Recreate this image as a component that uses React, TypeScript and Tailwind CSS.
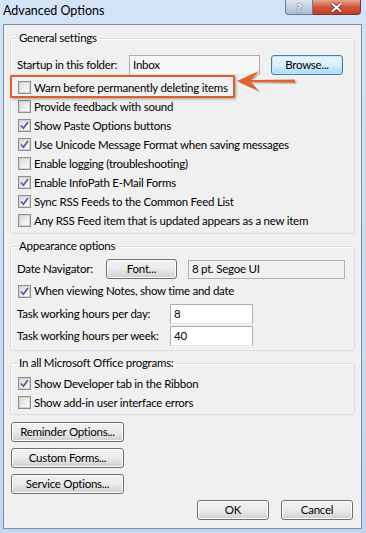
import type { ReactNode } from 'react'

const font = { fontFamily: 'Lato, "Open Sans", sans-serif' }

function CheckBox({ checked }: { checked: boolean }) {
  return (
    <span className="flex h-[13px] w-[13px] shrink-0 items-center justify-center border border-[#8e8f8f] bg-white">
      <span className="flex h-[11px] w-[11px] items-center justify-center border border-[#d2d2d2] bg-gradient-to-br from-[#dcdcdc] to-[#fbfbfb]">
        {checked && (
          <svg width="9" height="9" viewBox="0 0 9 9">
            <path d="M1 4.5 L3.4 7.2 L8 1" fill="none" stroke="#4a5f97" strokeWidth="1.7" />
          </svg>
        )}
      </span>
    </span>
  )
}

function Check({ label, checked = false, h = 'h-[19px]' }: { label: string; checked?: boolean; h?: string }) {
  return (
    <div className={`flex items-center gap-[3px] pl-[1px] ${h}`}>
      <CheckBox checked={checked} />
      <span className="whitespace-nowrap">{label}</span>
    </div>
  )
}

function Btn({ children, w, focus = false }: { children: ReactNode; w: string; focus?: boolean }) {
  return (
    <button
      className={`flex h-[20px] ${w} items-center justify-center whitespace-nowrap rounded-[3px] border ${
        focus
          ? 'border-[#3c7fb1] bg-gradient-to-b from-[#eaf6fd] via-[#d9f0fc] to-[#a7d9f5] shadow-[inset_0_0_0_1px_#c4e5f6]'
          : 'border-[#707070] bg-gradient-to-b from-[#f2f2f2] via-[#ebebeb] to-[#cfcfcf] shadow-[inset_0_0_0_1px_#fcfcfc]'
      } text-black`}
    >
      {children}
    </button>
  )
}

function Group({ title, children, className }: { title: string; children: ReactNode; className: string }) {
  return (
    <fieldset className={`mx-[6px] rounded-[3px] border border-[#d5dfe5] px-[6px] shadow-[inset_1px_1px_0_#fff] ${className}`}>
      <legend className="ml-[1px] h-[16px] px-[1px] leading-[16px]">{title}</legend>
      {children}
    </fieldset>
  )
}

export default function App() {
  return (
    <div
      className="relative h-[533px] w-[366px] overflow-hidden bg-gradient-to-b from-[#d3e4f6] to-[#c2d7ef] text-[11.5px] tracking-[-0.25px] text-black"
      style={font}
    >
      {/* title bar */}
      <div className="flex h-[24px] items-start">
        <div className="pl-[3px] pt-[1px] text-[12.5px] leading-[20px] tracking-normal text-black">Advanced Options</div>
        <div className="ml-auto mr-[5px] flex h-[15px]">
          <div className="flex w-[28px] items-center justify-center rounded-bl-[4px] border border-t-0 border-[#6d7b8d] bg-gradient-to-b from-[#dce6f2] to-[#a8bcd4] text-[11px] font-bold leading-none text-white [text-shadow:0_0_2px_#333]">
            ?
          </div>
          <div className="flex w-[48px] items-center justify-center rounded-br-[4px] border border-l-0 border-t-0 border-[#6d3a32] bg-gradient-to-b from-[#e8a493] via-[#d0553a] to-[#c23e22]">
            <svg width="13" height="11" viewBox="0 0 13 11">
              <path d="M2 1.5 L11 9.5 M11 1.5 L2 9.5" stroke="#5a1a10" strokeWidth="3.6" />
              <path d="M2 1.5 L11 9.5 M11 1.5 L2 9.5" stroke="#fff" strokeWidth="2.2" />
            </svg>
          </div>
        </div>
      </div>

      {/* dialog body */}
      <div className="ml-[3px] h-[505px] w-[359px] border border-[#7f8fa3] bg-[#f0f0f0] pt-[5px]">
        <Group title="General settings" className="pb-[3px] pt-[6px]">
          <div className="flex h-[26px] items-center">
            <span className="w-[112px] shrink-0 whitespace-nowrap">Startup in this folder:</span>
            <div className="flex h-[20px] w-[131px] items-center border border-[#abadb3] border-b-[#e3e9ef] bg-[#f7f7f7] pl-[3px]">
              Inbox
            </div>
            <div className="ml-[11px]">
              <Btn w="w-[72px]" focus>
                Browse...
              </Btn>
            </div>
          </div>
          <div className="relative">
            <Check label="Warn before permanently deleting items" />
            <div className="pointer-events-none absolute left-[-7px] top-[-3px] h-[23px] w-[225px] rounded-[1px] border-2 border-[#d9622b] shadow-[1px_1px_3px_rgba(0,0,0,0.35)]" />
            <svg className="pointer-events-none absolute left-[220px] top-[-9px]" width="64" height="28" viewBox="0 0 64 28">
              <g transform="translate(1.5,1.5)" fill="#000" opacity="0.22">
                <path d="M0 12 L22 2 L14 11 L58 10.5 L58 13.5 L14 13 L22 22 Z" />
              </g>
              <path d="M0 12 L22 2 L14 11 L58 10.5 L58 13.5 L14 13 L22 22 Z" fill="#e2642a" />
            </svg>
          </div>
          <Check label="Provide feedback with sound" />
          <Check label="Show Paste Options buttons" checked />
          <Check label="Use Unicode Message Format when saving messages" checked />
          <Check label="Enable logging (troubleshooting)" />
          <Check label="Enable InfoPath E-Mail Forms" checked />
          <Check label="Sync RSS Feeds to the Common Feed List" checked />
          <Check label="Any RSS Feed item that is updated appears as a new item" />
        </Group>

        <Group title="Appearance options" className="mt-[4px] pb-[3px] pt-[4px]">
          <div className="flex h-[22px] items-center">
            <span className="w-[89px] shrink-0 whitespace-nowrap">Date Navigator:</span>
            <Btn w="w-[71px]">Font...</Btn>
            <div className="ml-[11px] flex h-[19px] w-[157px] items-center border border-[#adb2b5] bg-[#f0f0f0] pl-[3px]">
              8 pt. Segoe UI
            </div>
          </div>
          <Check label="When viewing Notes, show time and date" checked h="h-[22px]" />
          <div className="flex h-[23px] items-center">
            <span className="w-[153px] shrink-0 whitespace-nowrap">Task working hours per day:</span>
            <div className="flex h-[20px] w-[83px] items-center border border-[#abadb3] border-b-[#e3e9ef] bg-white pl-[3px]">8</div>
          </div>
          <div className="flex h-[22px] items-center">
            <span className="w-[153px] shrink-0 whitespace-nowrap">Task working hours per week:</span>
            <div className="flex h-[20px] w-[83px] items-center border border-[#abadb3] border-b-[#e3e9ef] bg-white pl-[3px]">40</div>
          </div>
        </Group>

        <Group title="In all Microsoft Office programs:" className="mt-[4px] pb-[2px] pt-[3px]">
          <Check label="Show Developer tab in the Ribbon" checked />
          <Check label="Show add-in user interface errors" />
        </Group>

        <div className="ml-[7px] mt-[7px] flex flex-col gap-[6px]">
          <Btn w="w-[113px]">Reminder Options...</Btn>
          <Btn w="w-[113px]">Custom Forms...</Btn>
          <Btn w="w-[113px]">Service Options...</Btn>
        </div>
        <div className="mr-[8px] mt-[6px] flex justify-end gap-[12px]">
          <Btn w="w-[72px]">OK</Btn>
          <Btn w="w-[72px]">Cancel</Btn>
        </div>
      </div>
    </div>
  )
}
